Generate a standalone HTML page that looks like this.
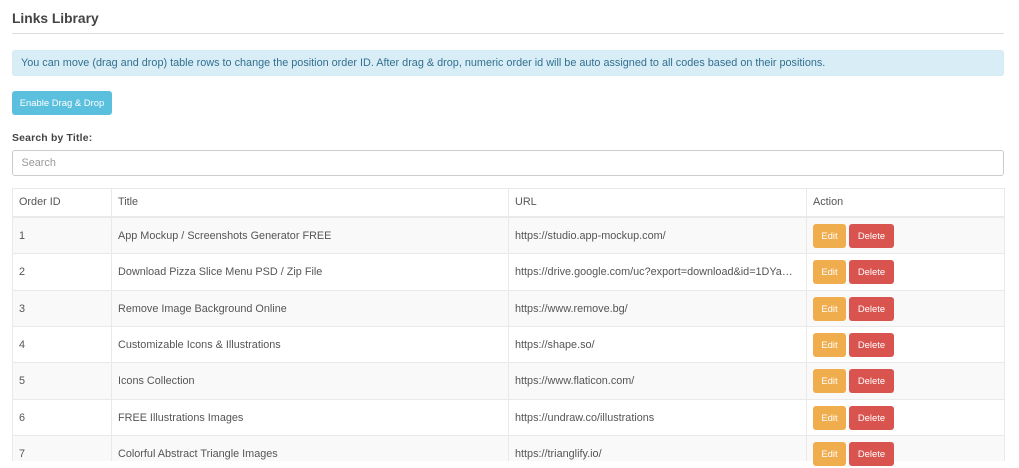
<!DOCTYPE html>
<html><head><meta charset="utf-8"><style>
html,body{margin:0;padding:0;width:1019px;height:461px;overflow:hidden;background:#fff;font-family:"Liberation Sans",sans-serif;color:#555;font-size:10.85px}
div{position:absolute;box-sizing:border-box;white-space:nowrap}
.t{line-height:14px}
.l{background:#e9e9e9}
.b{height:24px;border-radius:3px;color:#fff;font-size:9.45px;line-height:26px;text-align:center}
.e{left:813px;width:33px;background:#f0ad4e}
.d{left:849px;width:45px;background:#d9534f}
.s{left:12px;width:992px;background:#f9f9f9}
</style></head><body>
<div class="t" style="left:12px;top:12px;font-size:13.8px;font-weight:bold;color:#444;">Links Library</div>
<div style="left:12px;top:33px;width:992px;height:1px;background:#ddd"></div>
<div style="left:12px;top:50px;width:992px;height:26px;background:#d9edf7;border:1px solid #d3ebf5;border-radius:3px;color:#31708f;line-height:24px;padding-left:8px;">You can move (drag and drop) table rows to change the position order ID. After drag &amp; drop, numeric order id will be auto assigned to all codes based on their positions.</div>
<div class="b" style="left:12px;top:91px;width:100px;background:#5bc0de;">Enable Drag &amp; Drop</div>
<div class="t" style="left:12px;top:132px;font-size:10.4px;font-weight:bold;color:#444;letter-spacing:.2px">Search by Title:</div>
<div style="left:12px;top:150px;width:992px;height:26px;border:1px solid #ccc;border-radius:3px;line-height:24px;padding-left:8.5px;color:#999">Search</div>

<div class="s" style="top:217px;height:36px"></div>
<div class="s" style="top:290px;height:36px"></div>
<div class="s" style="top:363px;height:36px"></div>
<div class="s" style="top:436px;height:25px"></div>

<div class="l" style="left:12px;top:188px;width:992px;height:1px"></div>
<div class="l" style="left:12px;top:216px;width:992px;height:2px"></div>
<div class="l" style="left:12px;top:253px;width:992px;height:1px"></div>
<div class="l" style="left:12px;top:290px;width:992px;height:1px"></div>
<div class="l" style="left:12px;top:326px;width:992px;height:1px"></div>
<div class="l" style="left:12px;top:362px;width:992px;height:1px"></div>
<div class="l" style="left:12px;top:399px;width:992px;height:1px"></div>
<div class="l" style="left:12px;top:435px;width:992px;height:1px"></div>
<div class="l" style="left:12px;top:188px;width:1px;height:273px"></div>
<div class="l" style="left:111px;top:188px;width:1px;height:273px"></div>
<div class="l" style="left:508px;top:188px;width:1px;height:273px"></div>
<div class="l" style="left:806px;top:188px;width:1px;height:273px"></div>
<div class="l" style="left:1004px;top:188px;width:1px;height:273px"></div>

<div class="t" style="left:19px;top:195px">Order ID</div><div class="t" style="left:118px;top:195px">Title</div><div class="t" style="left:515px;top:195px">URL</div><div class="t" style="left:813px;top:195px">Action</div>

<div class="t" style="left:19px;top:229px">1</div><div class="t" style="left:118px;top:229px">App Mockup / Screenshots Generator FREE</div><div class="t" style="left:515px;top:229px">https://studio.app-mockup.com/</div>
<div class="t" style="left:19px;top:265px">2</div><div class="t" style="left:118px;top:265px">Download Pizza Slice Menu PSD / Zip File</div><div class="t" style="left:515px;top:265px">https://drive.google.com/uc?export=download&amp;id=1DYa…</div>
<div class="t" style="left:19px;top:302px">3</div><div class="t" style="left:118px;top:302px">Remove Image Background Online</div><div class="t" style="left:515px;top:302px">https://www.remove.bg/</div>
<div class="t" style="left:19px;top:338px">4</div><div class="t" style="left:118px;top:338px">Customizable Icons &amp; Illustrations</div><div class="t" style="left:515px;top:338px">https://shape.so/</div>
<div class="t" style="left:19px;top:374px">5</div><div class="t" style="left:118px;top:374px">Icons Collection</div><div class="t" style="left:515px;top:374px">https://www.flaticon.com/</div>
<div class="t" style="left:19px;top:411px">6</div><div class="t" style="left:118px;top:411px">FREE Illustrations Images</div><div class="t" style="left:515px;top:411px">https://undraw.co/illustrations</div>
<div class="t" style="left:19px;top:447px">7</div><div class="t" style="left:118px;top:447px">Colorful Abstract Triangle Images</div><div class="t" style="left:515px;top:447px">https://trianglify.io/</div>

<div class="b e" style="top:224px">Edit</div><div class="b d" style="top:224px">Delete</div>
<div class="b e" style="top:260px">Edit</div><div class="b d" style="top:260px">Delete</div>
<div class="b e" style="top:297px">Edit</div><div class="b d" style="top:297px">Delete</div>
<div class="b e" style="top:333px">Edit</div><div class="b d" style="top:333px">Delete</div>
<div class="b e" style="top:369px">Edit</div><div class="b d" style="top:369px">Delete</div>
<div class="b e" style="top:406px">Edit</div><div class="b d" style="top:406px">Delete</div>
<div class="b e" style="top:442px">Edit</div><div class="b d" style="top:442px">Delete</div>
</body></html>
